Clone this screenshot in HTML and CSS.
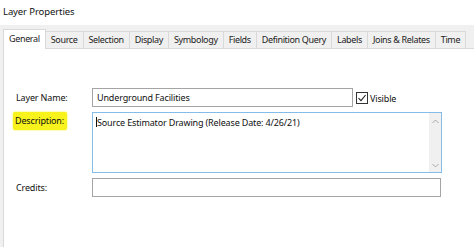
FILE: index.html
```html
<!DOCTYPE html>
<html lang="en">

<head>
    <meta charset="UTF-8">
    <meta name="viewport" content="width=device-width, initial-scale=1.0">
    <title>Layer Properties</title>
    <link rel="stylesheet" href="styles.css">
</head>

<body>
    <div class="title">Layer Properties</div>

    <div class="tabs">
        <div class="tab active">General</div>
        <div class="tab">Source</div>
        <div class="tab">Selection</div>
        <div class="tab">Display</div>
        <div class="tab">Symbology</div>
        <div class="tab">Fields</div>
        <div class="tab">Definition Query</div>
        <div class="tab">Labels</div>
        <div class="tab">Joins &amp; Relates</div>
        <div class="tab">Time</div>
    </div>

    <div class="panel">
        <div class="row">
            <div class="label">Layer Name:</div>
            <div class="input short">Underground Facilities</div>
            <div class="check">
                <svg class="box" width="12" height="12" viewBox="0 0 12 12">
                    <rect x="0.5" y="0.5" width="11" height="11" fill="#fff" stroke="#333" />
                    <path d="M2.5 6.2 L5 8.7 L9.6 3" fill="none" stroke="#222" stroke-width="1.1" />
                </svg>
                Visible
            </div>
        </div>

        <div class="row top">
            <div class="label"><span class="marker">Description:</span></div>
            <div class="textarea">
                <div class="text"><span class="caret"></span>Source Estimator Drawing (Release Date: 4/26/21)</div>
                <div class="scroll">
                    <svg width="7" height="5" viewBox="0 0 7 5"><path d="M0.5 4 L3.5 1 L6.5 4" fill="none" stroke="#a8a8a8" /></svg>
                    <svg width="7" height="5" viewBox="0 0 7 5"><path d="M0.5 1 L3.5 4 L6.5 1" fill="none" stroke="#a8a8a8" /></svg>
                </div>
            </div>
        </div>

        <div class="row">
            <div class="label">Credits:</div>
            <div class="input"></div>
        </div>
    </div>
</body>
</html>
```

FILE: styles.css
```css
body {
    font-family: 'Noto Sans', 'Open Sans', sans-serif;
    font-size: 9px;
    letter-spacing: -0.15px;
    color: #111;
    background: #f0f0f0;
    margin: 0;
    padding: 0;
    height: 247px;
    display: flex;
    flex-direction: column;
    overflow: hidden;
}

.title {
    background: #fff;
    height: 25px;
    line-height: 24px;
    padding-left: 3px;
    font-size: 9.5px;
    letter-spacing: -0.1px;
}

/* tab strip */
.tabs {
    display: flex;
    align-items: flex-end;
    height: 23px;
    padding-left: 3px;
    white-space: nowrap;
}

.tab {
    flex-shrink: 0;
    height: 16px;
    line-height: 16px;
    padding: 0 5px;
    background: #f0f0f0;
    border: 1px solid #d9d9d9;
    border-left: none;
    border-bottom: none;
    color: #222;
    letter-spacing: -0.35px;
}

.tab.active {
    height: 19px;
    line-height: 17px;
    background: #fff;
    border: 1px solid #d9d9d9;
    border-bottom: none;
    margin-bottom: -1px;
    position: relative;
    z-index: 1;
}

.panel {
    flex: 1;
    background: #fff;
    margin-left: 3px;
    border-top: 1px solid #d9d9d9;
    border-left: 1px solid #d9d9d9;
    padding: 39px 0 0 12px;
    display: flex;
    flex-direction: column;
    gap: 5px;
}

.row {
    display: flex;
    align-items: center;
}

.row.top {
    align-items: flex-start;
}

.label {
    width: 76px;
    flex-shrink: 0;
}

.marker {
    display: inline-block;
    background: #f8f31c;
    box-shadow: 0 0 2px #f8f31c;
    padding: 2px 3px 3px 2px;
    margin: 0 0 0 -3px;
    border-radius: 2px;
}

.input {
    width: 349px;
    height: 19px;
    line-height: 18px;
    border: 1px solid #a4a4a4;
    padding-left: 4px;
    box-sizing: border-box;
    background: #fff;
}

.input.short {
    width: 261px;
}

.check {
    display: flex;
    align-items: center;
    gap: 2px;
    margin-left: 3px;
    padding-top: 1px;
}

.textarea {
    width: 350px;
    height: 61px;
    box-sizing: border-box;
    border: 1px solid #86bde8;
    display: flex;
}

.text {
    flex: 1;
    padding: 3px 0 0 3px;
    background: #fff;
}

.caret {
    display: inline-block;
    width: 1px;
    height: 10px;
    background: #111;
    vertical-align: -1px;
}

.scroll {
    width: 12px;
    background: #f0f0f0;
    display: flex;
    flex-direction: column;
    justify-content: space-between;
    align-items: center;
    padding: 6px 0 4px;
}
```
